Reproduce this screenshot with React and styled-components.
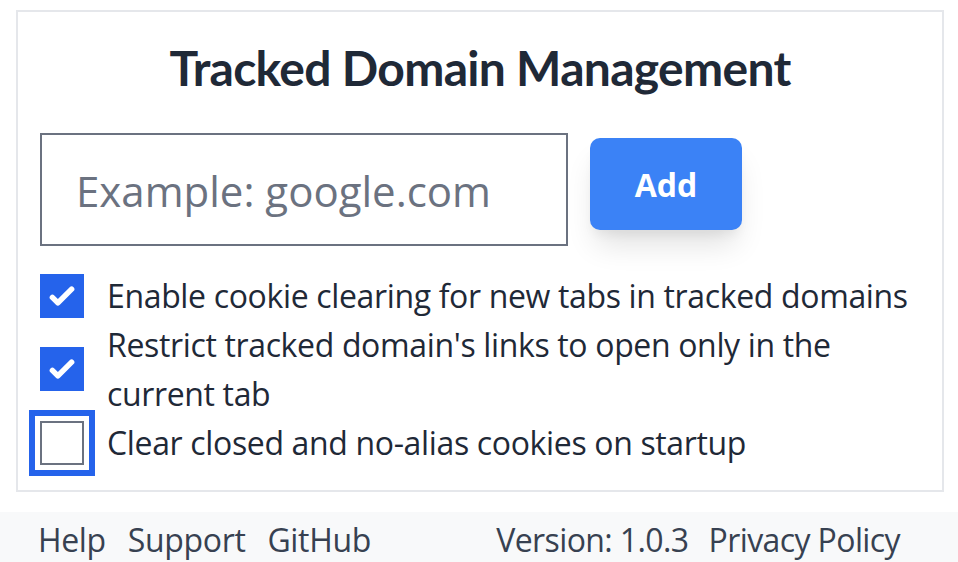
import React from "react";
import styled, { createGlobalStyle } from "styled-components";

const GlobalStyle = createGlobalStyle`
  html, body { margin: 0; padding: 0; background: #ffffff; }
  body {
    font-family: "Open Sans", "Noto Sans", sans-serif;
    color: #1f2937;
    overflow: hidden;
  }
`;

const Page = styled.div`
  width: 958px;
  height: 562px;
  overflow: hidden;
`;

const Card = styled.section`
  margin: 10px 14px 0 16px;
  border: 2px solid #e5e7eb;
  padding: 22px;
  height: 434px;
`;

const Title = styled.h1`
  margin: 2px 0 0;
  font-family: Lato, "Open Sans", sans-serif;
  font-size: 48px;
  line-height: 64px;
  font-weight: 700;
  letter-spacing: -0.7px;
  text-align: center;
  color: #1f2937;
`;

const FormRow = styled.div`
  display: flex;
  align-items: flex-start;
  gap: 22px;
  margin-top: 33px;
`;

const DomainInput = styled.input`
  box-sizing: border-box;
  width: 528px;
  height: 113px;
  border: 2px solid #6b7280;
  border-radius: 0;
  padding: 2px 0 0 34px;
  font-family: inherit;
  font-size: 42px;
  color: #1f2937;
  outline: none;
  &::placeholder { color: #6b7280; opacity: 1; }
`;

const AddButton = styled.button`
  margin-top: 5px;
  width: 152px;
  height: 92px;
  border: none;
  border-radius: 10px;
  background: #3b82f6;
  color: #ffffff;
  font-family: inherit;
  font-size: 32px;
  font-weight: 700;
  box-shadow: 0 20px 30px -6px rgba(0, 0, 0, 0.12), 0 8px 12px -4px rgba(0, 0, 0, 0.06);
  cursor: pointer;
`;

const Options = styled.div`
  display: flex;
  flex-direction: column;
  margin-top: 25px;
`;

const Option = styled.label`
  display: flex;
  align-items: center;
  gap: 23px;
  font-size: 32px;
  line-height: 49px;
  letter-spacing: -0.35px;
  color: #1f2937;
`;

const Box = styled.span`
  flex: none;
  box-sizing: border-box;
  width: 44px;
  height: 44px;
  display: flex;
  align-items: center;
  justify-content: center;
  background: ${(p) => (p.$checked ? "#2563eb" : "#ffffff")};
  border: ${(p) => (p.$checked ? "none" : "2px solid #6b7280")};
  box-shadow: ${(p) => (p.$focused ? "0 0 0 5px #ffffff, 0 0 0 11px #2563eb" : "none")};
`;

const LabelText = styled.span`
  display: block;
`;

const Footer = styled.footer`
  margin-top: 20px;
  height: 60px;
  background: #f8f9fa;
  display: flex;
  justify-content: space-between;
  padding: 4px 58px 0 38px;
  font-size: 32px;
  line-height: 48px;
  letter-spacing: -0.35px;
  color: #374151;
`;

const LinkGroup = styled.nav`
  display: flex;
  gap: ${(p) => (p.$tight ? "20px" : "22px")};
  letter-spacing: ${(p) => (p.$tight ? "-0.6px" : "inherit")};
`;

const FooterLink = styled.a`
  color: inherit;
  text-decoration: none;
`;

const Check = () => (
  <svg width="44" height="44" viewBox="0 0 16 16" fill="#ffffff">
    <path d="M12.207 4.793a1 1 0 010 1.414l-5 5a1 1 0 01-1.414 0l-2-2a1 1 0 011.414-1.414L6.5 9.086l4.293-4.293a1 1 0 011.414 0z" />
  </svg>
);

const options = [
  { text: "Enable cookie clearing for new tabs in tracked domains", checked: true },
  { text: "Restrict tracked domain's links to open only in the current tab", checked: true },
  { text: "Clear closed and no-alias cookies on startup", checked: false, focused: true },
];

export default function App() {
  return (
    <Page>
      <GlobalStyle />
      <Card>
        <Title>Tracked Domain Management</Title>
        <FormRow>
          <DomainInput placeholder="Example: google.com" />
          <AddButton>Add</AddButton>
        </FormRow>
        <Options>
          {options.map((o) => (
            <Option key={o.text}>
              <Box $checked={o.checked} $focused={o.focused}>
                {o.checked && <Check />}
              </Box>
              <LabelText>{o.text}</LabelText>
            </Option>
          ))}
        </Options>
      </Card>
      <Footer>
        <LinkGroup>
          <FooterLink href="#">Help</FooterLink>
          <FooterLink href="#">Support</FooterLink>
          <FooterLink href="#">GitHub</FooterLink>
        </LinkGroup>
        <LinkGroup $tight>
          <span>Version: 1.0.3</span>
          <FooterLink href="#">Privacy Policy</FooterLink>
        </LinkGroup>
      </Footer>
    </Page>
  );
}
